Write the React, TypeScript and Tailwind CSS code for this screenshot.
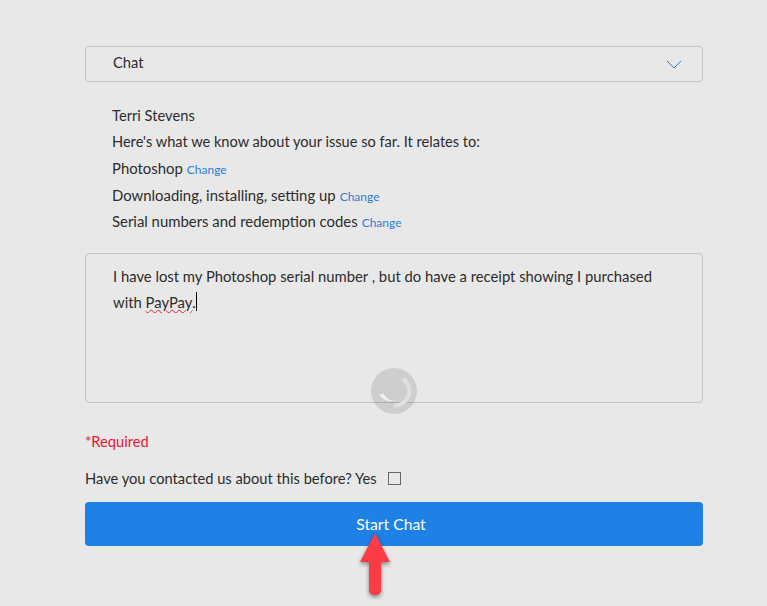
const font = "font-['Lato','Noto_Sans',sans-serif]";

const topics = [
  "Photoshop",
  "Downloading, installing, setting up",
  "Serial numbers and redemption codes",
];

const ChangeLink = () => (
  <a className="ml-1 text-[12px] leading-none text-[#2f7bd6]" href="#">
    Change
  </a>
);

const Spinner = () => (
  <svg
    className="absolute left-[285px] top-[114px]"
    width="46"
    height="46"
    viewBox="0 0 46 46"
  >
    <circle cx="23" cy="23" r="23" fill="#000" fillOpacity="0.11" />
    <path
      d="M32 11A14.5 14.5 0 0 1 23 37.5"
      fill="none"
      stroke="#e0e0e0"
      strokeWidth="4"
    />
    <path
      d="M31 29A15.5 15.5 0 0 1 8 27L12.5 25.5A11 11 0 0 0 31 29Z"
      fill="#f2f2f2"
    />
  </svg>
);

const RedArrow = () => (
  <svg
    className="absolute left-[272px] top-[29px] drop-shadow-[0_2px_2px_rgba(0,0,0,0.45)]"
    width="36"
    height="70"
    viewBox="0 0 36 70"
  >
    <path
      d="M18 2L33 31H24V59Q24 64 18 64Q12 64 12 59V31H3Z"
      fill="#fb3c45"
    />
  </svg>
);

export default function App() {
  return (
    <div
      className={`${font} h-[606px] w-full overflow-hidden bg-[#e8e8e8] pl-[85px] pt-[46px] text-[14.7px] text-[#2c2c2c]`}
    >
      <div className="w-[618px]">
        <div className="flex h-9 items-center justify-between rounded border border-[#c4c4c4] pb-[3px] pl-[27px] pr-5">
          <span>Chat</span>
          <svg width="16" height="9" viewBox="0 0 16 9" fill="none" className="mt-[3px]">
            <path d="M1 1L8 8L15 1" stroke="#2f7bd6" strokeWidth="1" />
          </svg>
        </div>

        <div className="mt-5 pl-[27px] leading-[26.5px]">
          <div>Terri Stevens</div>
          <div className="text-[14.6px]">
            Here's what we know about your issue so far. It relates to:
          </div>
          {topics.map((t) => (
            <div key={t} className="text-[14.9px]">
              {t}
              <ChangeLink />
            </div>
          ))}
        </div>

        <div className="relative mt-[18px] h-[150px] rounded border border-[#c4c4c4] pl-[27px] pr-10 pt-[9px] text-[14.82px] leading-[26px]">
          <div>
            I have lost my Photoshop serial number , but do have a receipt
            showing I purchased
          </div>
          <div className="flex items-center">
            with&nbsp;
            <span className="underline decoration-[#e0202a] decoration-wavy decoration-1">
              PayPay
            </span>
            .<span className="inline-block h-[19px] w-px bg-black" />
          </div>
          <Spinner />
        </div>

        <div className="mt-[26px] leading-6 text-[#f0142d]">*Required</div>

        <div className="mt-[14px] flex h-6 items-center">
          <span>Have you contacted us about this before? Yes</span>
          <span className="ml-[11px] h-[13px] w-[13px] border border-[#666]" />
        </div>

        <div className="relative mt-[11px] flex h-11 items-center justify-center rounded bg-[#1d81e6] pt-[2px] text-[15.7px] text-white">
          <span className="mr-[6px]">Start Chat</span>
          <RedArrow />
        </div>
      </div>
    </div>
  );
}
